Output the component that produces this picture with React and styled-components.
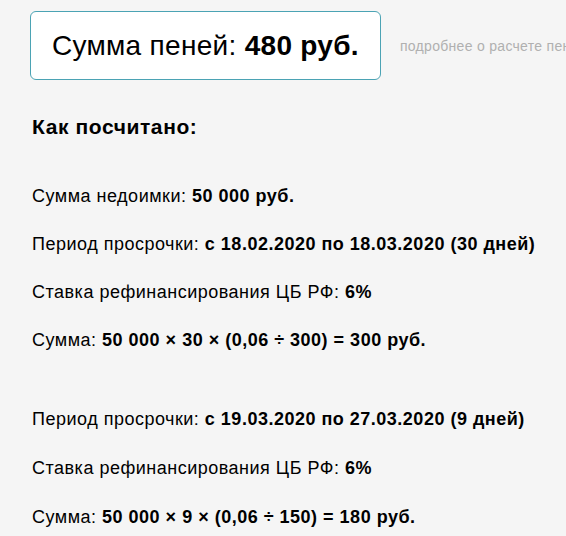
import React from "react";
import styled, { createGlobalStyle } from "styled-components";

const Global = createGlobalStyle`
  html, body { margin: 0; padding: 0; background: #f5f5f5; }
  body { font-family: "Liberation Sans", Arial, sans-serif; color: #000; overflow: hidden; }
`;

const Page = styled.div`
  width: 566px;
  height: 536px;
  overflow: hidden;
  padding: 11px 0 0 30px;
  box-sizing: border-box;
`;

const Header = styled.div`
  display: flex;
  align-items: center;
  gap: 19px;
  white-space: nowrap;
`;

const TotalBox = styled.div`
  flex: none;
  box-sizing: border-box;
  height: 69px;
  display: flex;
  align-items: center;
  padding: 0 21px;
  background: #fff;
  border: 1px solid #4ba3b4;
  border-radius: 6px;
  font-size: 28px;
  letter-spacing: 0.3px;
`;

const MoreLink = styled.span`
  font-size: 14px;
  letter-spacing: 0.3px;
  color: #b0b0b0;
`;

const Heading = styled.h3`
  margin: 34px 0 0 2px;
  font-size: 21px;
  line-height: 26px;
  letter-spacing: 0.6px;
  font-weight: bold;
`;

const Group = styled.div`
  margin: ${(p) => p.$top}px 0 0 2px;
  display: flex;
  flex-direction: column;
  gap: ${(p) => p.$gap}px;
`;

const Line = styled.p`
  margin: 0;
  font-size: 18px;
  line-height: 24px;
  letter-spacing: 0.5px;
  white-space: nowrap;
`;

const groups = [
  [
    ["Сумма недоимки: ", "50 000 руб."],
    ["Период просрочки: ", "с 18.02.2020 по 18.03.2020 (30 дней)"],
    ["Ставка рефинансирования ЦБ РФ: ", "6%"],
    ["Сумма: ", "50 000 × 30 × (0,06 ÷ 300) = 300 руб."],
  ],
  [
    ["Период просрочки: ", "с 19.03.2020 по 27.03.2020 (9 дней)"],
    ["Ставка рефинансирования ЦБ РФ: ", "6%"],
    ["Сумма: ", "50 000 × 9 × (0,06 ÷ 150) = 180 руб."],
  ],
];

export default function App() {
  return (
    <>
      <Global />
      <Page>
        <Header>
          <TotalBox>
            Сумма пеней:&nbsp;<b>480 руб.</b>
          </TotalBox>
          <MoreLink>подробнее о расчете пеней</MoreLink>
        </Header>
        <Heading>Как посчитано:</Heading>
        {groups.map((g, i) => (
          <Group key={i} $top={i === 0 ? 44 : 55} $gap={i === 0 ? 24 : 25}>
            {g.map(([label, value], j) => (
              <Line key={j}>
                {label}
                <b>{value}</b>
              </Line>
            ))}
          </Group>
        ))}
      </Page>
    </>
  );
}
